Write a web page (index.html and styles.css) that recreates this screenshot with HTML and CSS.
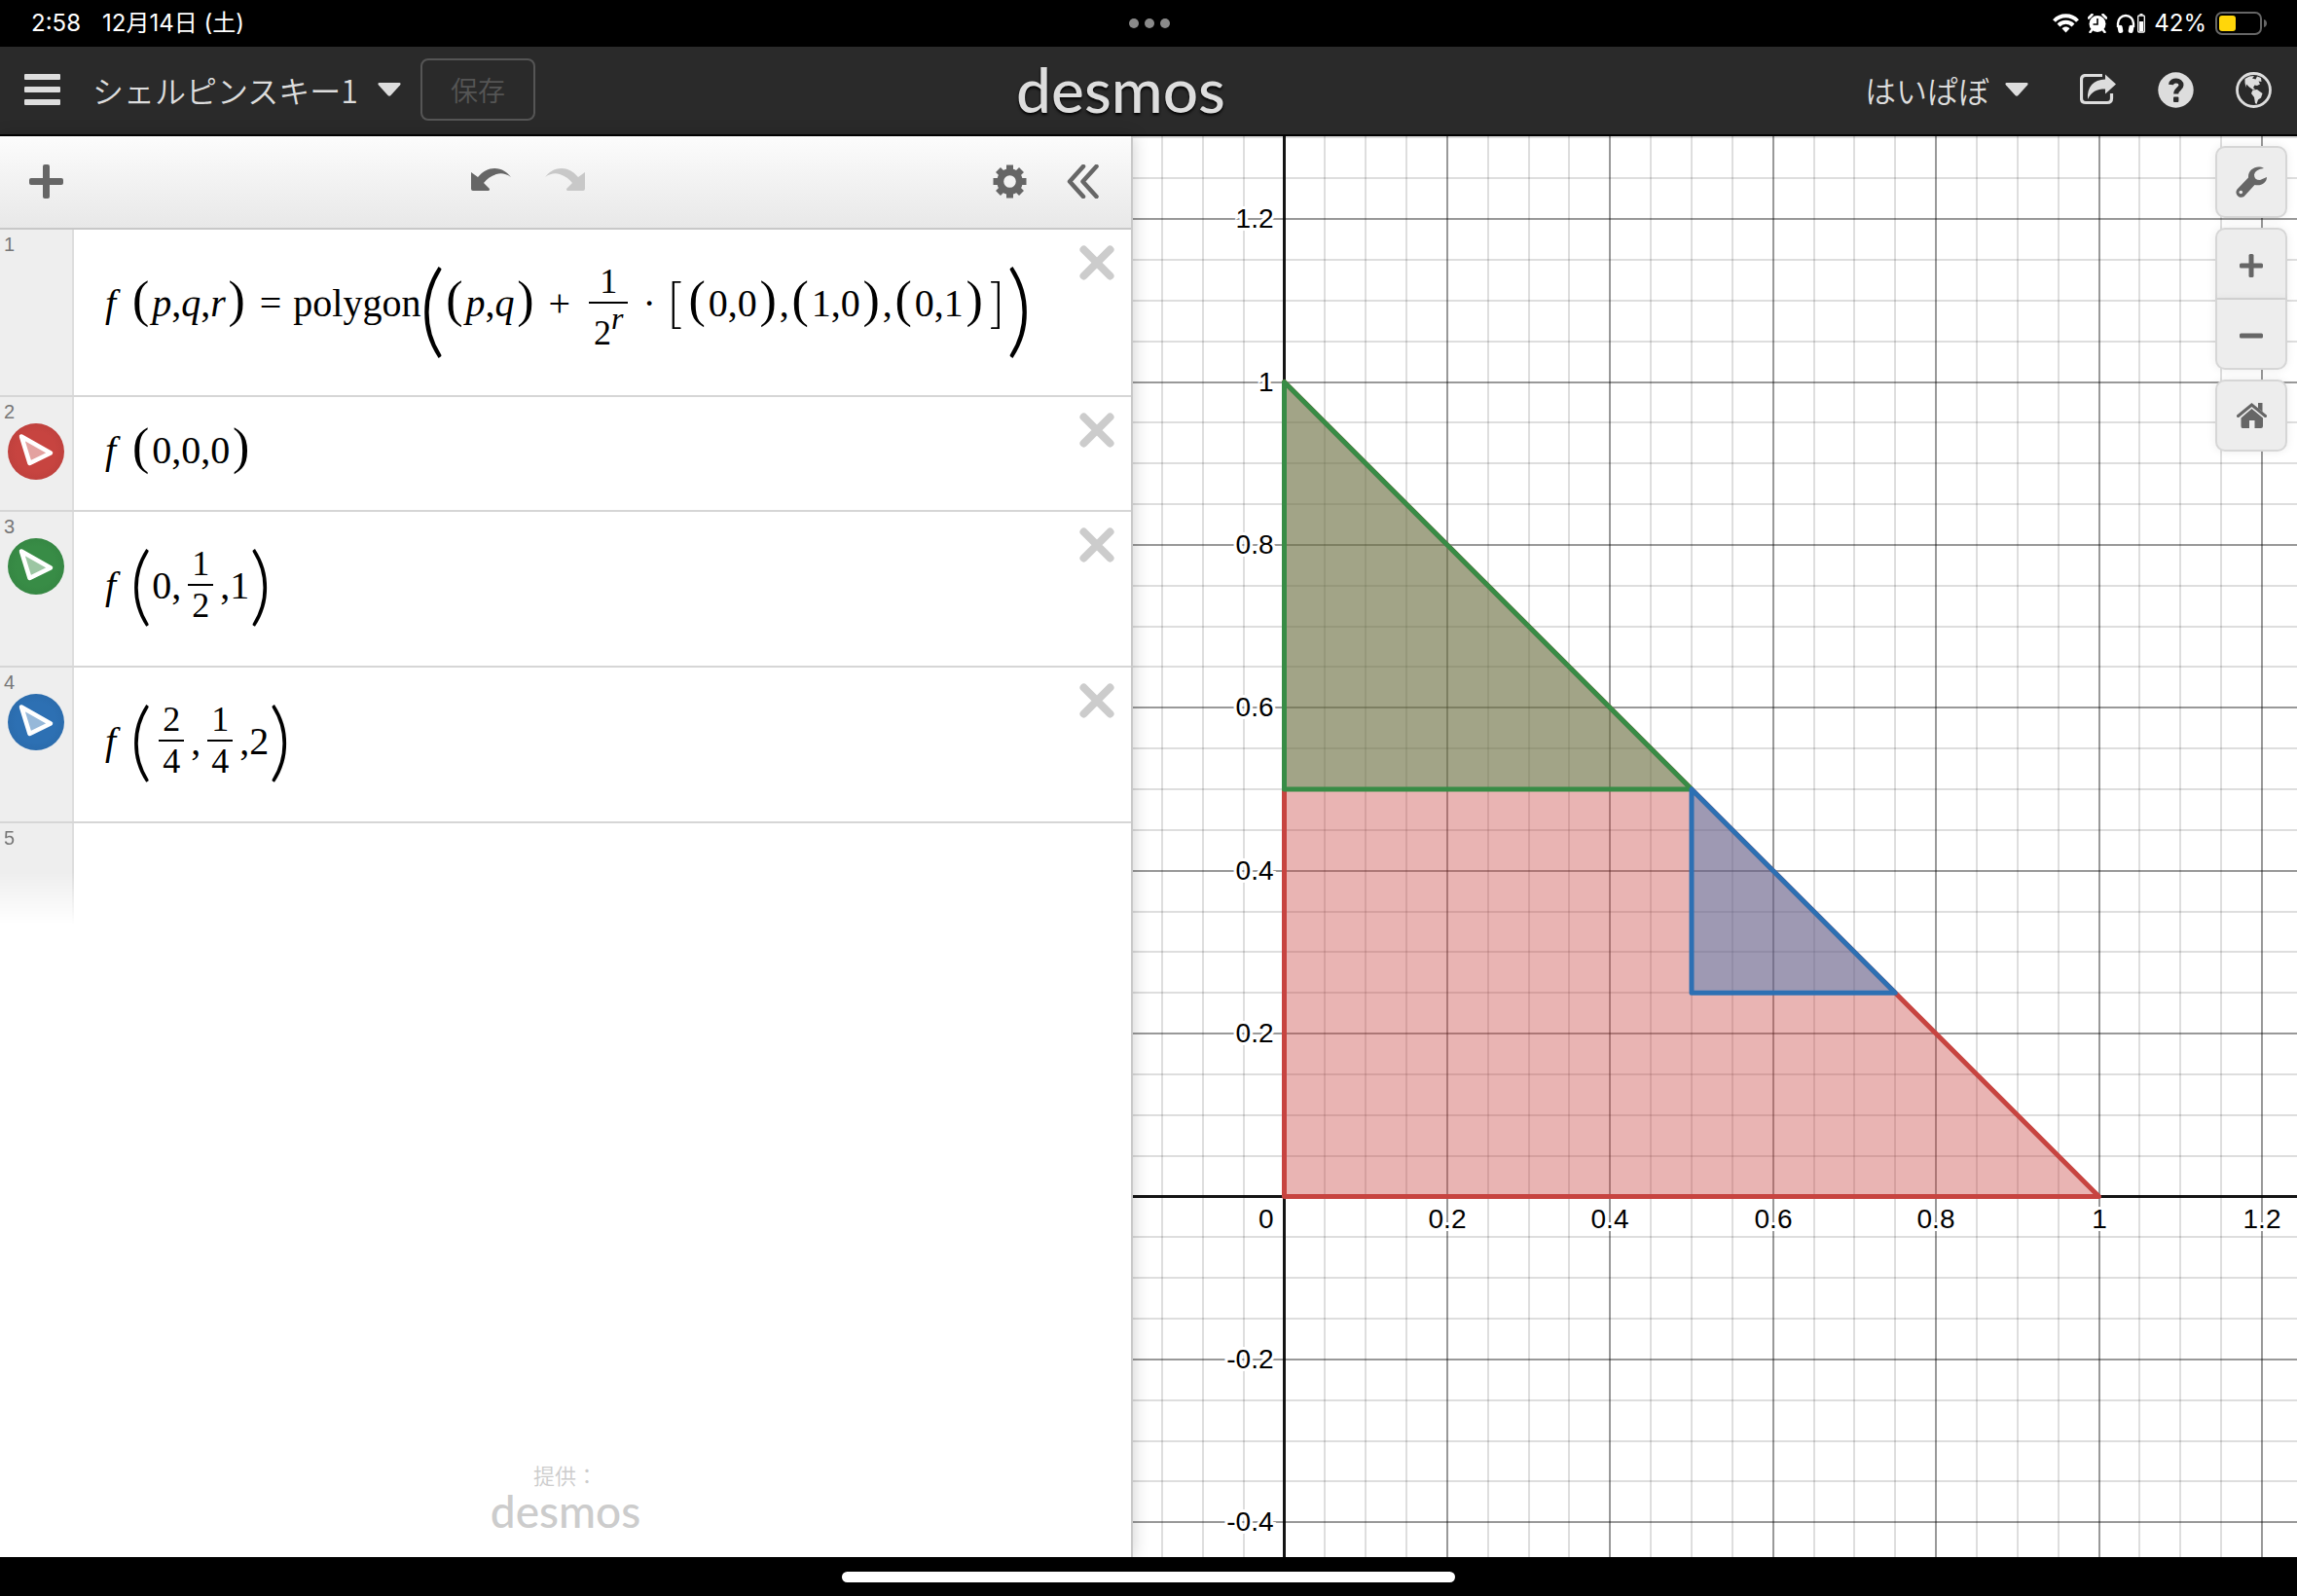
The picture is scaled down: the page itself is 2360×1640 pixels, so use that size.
FILE: index.html
```
<!DOCTYPE html>
<html lang="ja">
<head>
  <meta charset="UTF-8">
  <meta name="viewport" content="width=device-width, initial-scale=1.0">
  <title>シェルピンスキー1</title>
  <link rel="stylesheet" href="styles.css">
</head>
<body>

  <!-- Status bar -->
  <div class="status-bar">
    <div class="status-left">
      <span>2:58</span>
      <span>12月14日 (土)</span>
    </div>
    <div class="status-dots"><i></i><i></i><i></i></div>
    <div class="status-right">
      <svg width="27" height="20" viewBox="0 0 27 20" fill="none" stroke="#fff" stroke-width="4">
        <path d="M1.5 7.5C8 .6 19 .6 25.500 7.500"/>
        <path d="M6 12C10 7.800 17 7.800 21 12"/>
        <path d="M9.500 15.200C12 13 15 13 17.500 15.200L13.500 19.600Z" fill="#fff" stroke="none"/>
      </svg>
      <svg width="20" height="20" viewBox="0 0 20 20">
        <circle cx="10" cy="10.500" r="8.500" fill="#fff"/>
        <path d="M1 4.500L4.500 1M19 4.500L15.500 1M4.500 16.500L2.500 19M15.500 16.500L17.500 19" stroke="#fff" stroke-width="2.500" stroke-linecap="round"/>
        <path d="M10 5v6H5.500" fill="none" stroke="#000" stroke-width="1.600"/>
      </svg>
      <span class="headphones">
        <svg width="20" height="20" viewBox="0 0 20 20">
          <path d="M2 14V10a8 8 0 0 1 16 0V14" fill="none" stroke="#fff" stroke-width="2.400"/>
          <rect x="2" y="12" width="5" height="8" rx="2" fill="#fff" transform="rotate(-10 4 16)"/>
          <rect x="13" y="12" width="5" height="8" rx="2" fill="#fff" transform="rotate(10 16 16)"/>
        </svg>
        <svg width="8" height="20" viewBox="0 0 8 20">
          <rect x=".7" y="2" width="6.600" height="17" rx="1" fill="none" stroke="#fff" stroke-width="1.300"/>
          <rect x="2.500" y="0" width="3" height="1.500" fill="#fff"/>
          <rect x="2" y="8" width="4" height="10" fill="#fff"/>
        </svg>
      </span>
      <span>42%</span>
      <svg width="54" height="24" viewBox="0 0 54 24">
        <rect x="1" y="1" width="46" height="22" rx="6" fill="none" stroke="#666" stroke-width="2"/>
        <rect x="4" y="4" width="17" height="16" rx="3" fill="#ffd60a"/>
        <path d="M50 8C54 9 54 15 50 16Z" fill="#666"/>
      </svg>
    </div>
  </div>

  <!-- Header -->
  <header class="header">
    <div class="header-left">
      <button class="icon-btn" aria-label="メニュー">
        <svg width="37" height="32" viewBox="0 0 37 32" fill="#ddd">
          <rect width="37" height="6" rx="1"/><rect y="13" width="37" height="6" rx="1"/><rect y="26" width="37" height="6" rx="1"/>
        </svg>
      </button>
      <button class="title-btn">
        シェルピンスキー1
        <svg width="24" height="14" viewBox="0 0 24 14" fill="#ddd"><path d="M1.500 0H22.500Q24.500 .5 23 2.500L13.500 13Q12 14.500 10.500 13L1 2.500Q-.5 .5 1.500 0Z"/></svg>
      </button>
      <button class="save-btn" disabled>保存</button>
    </div>
    <h1 class="logo">desmos</h1>
    <div class="header-right">
      <button class="title-btn user-btn">
        はいぱぼ
        <svg width="24" height="14" viewBox="0 0 24 14" fill="#ddd"><path d="M1.500 0H22.500Q24.500 .5 23 2.500L13.500 13Q12 14.500 10.500 13L1 2.500Q-.5 .5 1.500 0Z"/></svg>
      </button>
      <button class="icon-btn" aria-label="共有">
        <svg width="37" height="32" viewBox="0 0 37 32">
          <path d="M23 1.500H6Q1.500 1.500 1.500 6V25Q1.500 29.500 6 29.500H28Q32.500 29.500 32.500 25V20" fill="none" stroke="#ddd" stroke-width="3.200"/>
          <path d="M26 .5L37 10.500L26 20.500V15.500C17 15.500 12 18 8 26C7 13 14 6 26 5.500Z" fill="#ddd"/>
        </svg>
      </button>
      <button class="icon-btn" aria-label="ヘルプ">
        <svg width="37" height="37" viewBox="0 0 37 37">
          <circle cx="18.500" cy="18.500" r="18.200" fill="#ddd"/>
          <path d="M13.500 13C14 7.500 24 7.500 24 13.500C24 17.500 18.700 17.500 18.700 22.500" fill="none" stroke="#2a2a2a" stroke-width="5"/>
          <rect x="16" y="25.500" width="5.400" height="5.400" rx="1" fill="#2a2a2a"/>
        </svg>
      </button>
      <button class="icon-btn" aria-label="言語">
        <svg width="37" height="37" viewBox="0 0 37 37">
          <circle cx="18.500" cy="18.500" r="17" fill="none" stroke="#ddd" stroke-width="2.800"/>
          <path d="M9.500 7L14 4.500L19 4L17 6.500L20.500 7.500L22 4.500L26 6L26.500 10L23.500 9.500L25 12.500L22 14L19.500 13.500L18 16L20 17.500L17.500 18L14 15.500L11 12.500L10.500 16L9.500 11Z" fill="#ddd"/>
          <path d="M17.500 18.500L22 18L27.500 22L26 26.500L23 28.500L21.500 33L20 32L19 26L16 22Z" fill="#ddd"/>
        </svg>
      </button>
    </div>
  </header>

  <main class="main">
    <!-- Expression list -->
    <section class="panel">
      <div class="toolbar">
        <button class="icon-btn" aria-label="追加">
          <svg width="35" height="35" viewBox="0 0 35 35" fill="#666"><rect x="14" width="7" height="35" rx="2"/><rect y="14" width="35" height="7" rx="2"/></svg>
        </button>
        <div class="toolbar-history">
          <button class="icon-btn" aria-label="元に戻す">
            <svg width="41" height="23" viewBox="0 0 41 23" fill="#666"><path d="M0 4L7 9C12 3 18 0 24 0C32 0 37 4 41 9C36 5.500 31 4.500 26 6C20 8 16 11 13 15L19 21Q19 23 18 23H2Q0 23 0 21Z"/></svg>
          </button>
          <button class="icon-btn" aria-label="やり直し" disabled>
            <svg width="41" height="23" viewBox="0 0 41 23" fill="#c8c8c8"><path d="M41 4L34 9C29 3 23 0 17 0C9 0 4 4 0 9C5 5.500 10 4.500 15 6C21 8 25 11 28 15L22 21Q22 23 23 23H39Q41 23 41 21Z"/></svg>
          </button>
        </div>
        <div class="toolbar-right">
          <button class="icon-btn" aria-label="リストを編集">
            <svg width="35" height="35" viewBox="-17.5 -17.5 35 35">
              <circle r="9.800" fill="none" stroke="#666" stroke-width="7"/>
              <path d="M0-17V-12M0 17V12M-17 0H-12M17 0H12M-12-12L-8.500-8.500M12 12L8.500 8.500M-12 12L-8.500 8.500M12-12L8.500-8.500" stroke="#666" stroke-width="7"/>
            </svg>
          </button>
          <button class="icon-btn" aria-label="リストを隠す">
            <svg width="33" height="35" viewBox="0 0 33 35" fill="none" stroke="#666" stroke-width="4.500" stroke-linecap="round" stroke-linejoin="round"><path d="M17 2L3 17.500L17 33M30.500 2L16.500 17.500L30.500 33"/></svg>
          </button>
        </div>
      </div>

      <ol class="expressions">
        <li class="row">
          <div class="gutter">1</div>
          <div class="math math-sup">
            <i class="fn">f</i><span class="paren">(</span><i>p</i>,<i>q</i>,<i>r</i><span class="paren">)</span><span class="op">=</span>polygon<span class="paren big bigger">(</span><span class="paren">(</span><i>p</i>,<i>q</i><span class="paren">)</span><span class="op">+</span>
            <span class="frac"><span class="num">1</span><span class="den">2<sup>r</sup></span></span>
            <span class="dot">·</span><span class="bracket">[</span><span class="paren">(</span>0,0<span class="paren">)</span>,<span class="paren">(</span>1,0<span class="paren">)</span>,<span class="paren">(</span>0,1<span class="paren">)</span><span class="bracket">]</span><span class="paren big bigger">)</span>
          </div>
          <button class="delete" aria-label="削除"><svg width="36" height="36" viewBox="0 0 36 36"><path d="M4.500 4.500L31.500 31.500M31.500 4.500L4.500 31.500"/></svg></button>
        </li>
        <li class="row">
          <div class="gutter">2
            <button class="color red" aria-label="表示"><svg width="58" height="58" viewBox="0 0 58 58"><path d="M14 13.500L44 30.500L22.500 41Z"/></svg></button>
          </div>
          <div class="math">
            <i class="fn">f</i><span class="paren">(</span>0,0,0<span class="paren">)</span>
          </div>
          <button class="delete" aria-label="削除"><svg width="36" height="36" viewBox="0 0 36 36"><path d="M4.500 4.500L31.500 31.500M31.500 4.500L4.500 31.500"/></svg></button>
        </li>
        <li class="row">
          <div class="gutter">3
            <button class="color green" aria-label="表示"><svg width="58" height="58" viewBox="0 0 58 58"><path d="M14 13.500L44 30.500L22.500 41Z"/></svg></button>
          </div>
          <div class="math">
            <i class="fn">f</i><span class="paren big">(</span>0,<span class="frac"><span class="num">1</span><span class="den">2</span></span>,1<span class="paren big">)</span>
          </div>
          <button class="delete" aria-label="削除"><svg width="36" height="36" viewBox="0 0 36 36"><path d="M4.500 4.500L31.500 31.500M31.500 4.500L4.500 31.500"/></svg></button>
        </li>
        <li class="row">
          <div class="gutter">4
            <button class="color blue" aria-label="表示"><svg width="58" height="58" viewBox="0 0 58 58"><path d="M14 13.500L44 30.500L22.500 41Z"/></svg></button>
          </div>
          <div class="math">
            <i class="fn">f</i><span class="paren big">(</span><span class="frac"><span class="num">2</span><span class="den">4</span></span>,<span class="frac"><span class="num">1</span><span class="den">4</span></span>,2<span class="paren big">)</span>
          </div>
          <button class="delete" aria-label="削除"><svg width="36" height="36" viewBox="0 0 36 36"><path d="M4.500 4.500L31.500 31.500M31.500 4.500L4.500 31.500"/></svg></button>
        </li>
        <li class="row row-new">
          <div class="gutter">5</div>
        </li>
      </ol>

      <div class="powered">
        <span>提供：</span>
        <span class="powered-logo">desmos</span>
      </div>
    </section>

    <!-- Graph paper -->
    <section class="graph">
      <svg class="graph-svg" id="graph"></svg>
      <div class="graph-buttons">
        <button class="graph-btn" aria-label="グラフ設定">
          <svg width="32" height="32" viewBox="0 0 32 32"><path d="M29 2C22-2 12.500 3 13 11.500L1.500 23.500C-2 28 4 34 8.500 31L19.500 19C26 20.500 32 17 32 11L25 14Q19 14 19 8.500Q20 3 29 2Z" fill="#666"/><circle cx="5.300" cy="26.500" r="1.800" fill="#ededed"/></svg>
        </button>
        <div class="zoom-group">
          <button class="graph-btn" aria-label="拡大">
            <svg width="24" height="24" viewBox="0 0 24 24" fill="#666"><rect x="9.500" width="5" height="24" rx="1.500"/><rect y="9.500" width="24" height="5" rx="1.500"/></svg>
          </button>
          <button class="graph-btn" aria-label="縮小">
            <svg width="24" height="24" viewBox="0 0 24 24" fill="#666"><rect y="9.500" width="24" height="5" rx="1.500"/></svg>
          </button>
        </div>
        <button class="graph-btn" aria-label="ホーム">
          <svg width="31" height="26" viewBox="0 0 31 26"><path d="M1.500 13.500L15.500 2L29.500 13.500" fill="none" stroke="#666" stroke-width="3" stroke-linecap="round"/><path d="M22 0H26.500V9L22 5.500ZM15.500 6L27 15.500V24Q27 26 25 26H18.500V18H13V26H6Q4.500 26 4.500 24V15.500Z" fill="#666"/></svg>
        </button>
      </div>
    </section>
  </main>

  <div class="home-bar"><span></span></div>

  <script>
    // Viewport: where the origin sits and how many pixels one unit takes
    const origin = { x: 155.5, y: 1089.5 };
    const unit = 837;
    const step = 0.05;
    const svg = document.getElementById('graph');

    const polygons = [
      { color: '#c74440', points: [[0, 0], [1, 0], [0, 1]] },
      { color: '#388c46', points: [[0, 0.5], [0.5, 0.5], [0, 1]] },
      { color: '#2d70b3', points: [[0.5, 0.25], [0.75, 0.25], [0.5, 0.5]] }
    ];

    function add(tag, attrs, text) {
      const el = document.createElementNS('http://www.w3.org/2000/svg', tag);
      for (const key in attrs) el.setAttribute(key, attrs[key]);
      if (text !== undefined) el.textContent = text;
      svg.appendChild(el);
    }

    const px = x => origin.x + x * unit;
    const py = y => origin.y - y * unit;

    function drawGraph() {
      const w = svg.clientWidth;
      const h = svg.clientHeight;
      svg.innerHTML = '';

      const iMin = Math.ceil(-origin.x / unit / step);
      const iMax = Math.floor((w - origin.x) / unit / step);
      const jMin = Math.ceil((origin.y - h) / unit / step);
      const jMax = Math.floor(origin.y / unit / step);

      // Grid lines, every fourth one is major
      for (let i = iMin; i <= iMax; i++) {
        if (i === 0) continue;
        const x = Math.round(px(i * step));
        add('line', { x1: x, x2: x, y1: 0, y2: h, class: i % 4 ? 'minor' : 'major' });
      }
      for (let j = jMin; j <= jMax; j++) {
        if (j === 0) continue;
        const y = Math.round(py(j * step));
        add('line', { x1: 0, x2: w, y1: y, y2: y, class: j % 4 ? 'minor' : 'major' });
      }
      add('line', { x1: origin.x, x2: origin.x, y1: 0, y2: h, class: 'axis' });
      add('line', { x1: 0, x2: w, y1: origin.y, y2: origin.y, class: 'axis' });

      // Numbers
      for (let i = iMin; i <= iMax; i++) {
        if (i % 4 || i === 0) continue;
        add('text', { x: Math.round(px(i * step)), y: origin.y + 32, class: 'label label-x' }, +(i * step).toFixed(1));
      }
      for (let j = jMin; j <= jMax; j++) {
        if (j % 4 || j === 0) continue;
        add('text', { x: origin.x - 11, y: Math.round(py(j * step)) + 9, class: 'label label-y' }, +(j * step).toFixed(1));
      }
      add('text', { x: origin.x - 11, y: origin.y + 32, class: 'label label-y' }, 0);

      polygons.forEach(p => {
        const points = p.points.map(([x, y]) => px(x) + ',' + py(y)).join(' ');
        add('polygon', { points: points, fill: p.color, stroke: p.color, class: 'shape' });
      });
    }

    drawGraph();
    window.addEventListener('resize', drawGraph);
  </script>

</body>
</html>
```
FILE: styles.css
```
* {
  box-sizing: border-box;
}

body {
  margin: 0;
  min-height: 100vh;
  display: flex;
  flex-direction: column;
  background: #fff;
  font-family: "Liberation Sans", "Noto Sans CJK JP", sans-serif;
}

button {
  margin: 0;
  padding: 0;
  border: none;
  background: none;
  font-family: inherit;
  cursor: pointer;
}

svg {
  display: block;
}

/* Status bar */
.status-bar {
  height: 48px;
  padding: 0 30px 0 32px;
  display: grid;
  grid-template-columns: 1fr auto 1fr;
  align-items: center;
  background: #000;
  color: #fff;
  font-family: Inter, "Noto Sans CJK JP", sans-serif;
  font-size: 24px;
  line-height: 32px;
  font-weight: 400;
}

.status-left {
  display: flex;
  gap: 22px;
}

.status-dots {
  display: flex;
  gap: 6px;
}

.status-dots i {
  width: 10px;
  height: 10px;
  border-radius: 50%;
  background: #8a8a8a;
}

.status-right {
  display: flex;
  justify-content: flex-end;
  align-items: center;
  gap: 9px;
}

.headphones {
  display: flex;
  gap: 2px;
}

/* Header */
.header {
  height: 92px;
  padding: 0 26px 2px 25px;
  display: grid;
  grid-template-columns: 1fr auto 1fr;
  align-items: center;
  background: #2a2a2a;
  border-bottom: 2px solid #000;
  color: #ddd;
}

.header-left,
.header-right {
  display: flex;
  align-items: center;
}

.header-right {
  justify-content: flex-end;
  gap: 43px;
}

.title-btn {
  display: flex;
  align-items: center;
  gap: 20px;
  color: #ddd;
  font-family: "Noto Sans CJK JP", sans-serif;
  font-size: 32px;
  line-height: 48px;
  font-weight: 350;
}

.header-left .title-btn {
  margin: 0 20px 0 33px;
}

.user-btn {
  gap: 16px;
  margin-right: 10px;
}

.save-btn {
  width: 118px;
  height: 64px;
  border: 2px solid #555;
  border-radius: 8px;
  color: #555;
  font-size: 28px;
  font-weight: 350;
}

.logo {
  margin: 0 56px 0 0;
  font-family: Lato, sans-serif;
  font-size: 64px;
  line-height: 80px;
  font-weight: 500;
  text-shadow: 0 2px 3px #000;
}

/* Main area */
.main {
  flex: 1;
  display: grid;
  grid-template-columns: 291fr 299fr;
}

.panel {
  z-index: 1;
  display: flex;
  flex-direction: column;
  background: #fff;
  border-right: 2px solid #c8c8c8;
  box-shadow: 0 0 16px rgba(0, 0, 0, 0.2);
}

.toolbar {
  height: 96px;
  padding: 0 33px 2px 30px;
  display: grid;
  grid-template-columns: 1fr auto 1fr;
  align-items: center;
  background: linear-gradient(#fcfcfc, #e8e8e8);
  border-bottom: 2px solid #c8c8c8;
}

.toolbar-history {
  display: flex;
  gap: 35px;
  margin: 0 74px 4px 0;
}

.toolbar-right {
  display: flex;
  justify-content: flex-end;
  gap: 41px;
}

/* Expressions */
.expressions {
  margin: 0;
  padding: 0;
  list-style: none;
}

.row {
  display: flex;
  align-items: stretch;
  border-bottom: 2px solid #d6d6d6;
}

.row-new {
  border-bottom: none;
}

.gutter {
  width: 76px;
  padding-left: 4px;
  background: #eee;
  border-right: 2px solid #ddd;
  color: #777;
  font-size: 20px;
  line-height: 30px;
}

.row-new .gutter {
  height: 104px;
  -webkit-mask-image: linear-gradient(#000 48%, transparent);
  mask-image: linear-gradient(#000 48%, transparent);
}

.color {
  display: block;
  width: 58px;
  height: 58px;
  margin: -3px 0 0 4px;
  border-radius: 50%;
}

.color path {
  fill: rgba(255, 255, 255, 0.5);
  stroke: #fff;
  stroke-width: 4.5;
  stroke-linejoin: round;
}

.red {
  background: radial-gradient(#c74440 50%, #b53d3a);
}

.green {
  background: radial-gradient(#388c46 50%, #32803f);
}

.blue {
  background: radial-gradient(#2d70b3 50%, #2866a4);
}

.delete {
  align-self: flex-start;
  margin: 16px 17px 0 auto;
}

.delete path {
  stroke: #ccc;
  stroke-width: 8;
  stroke-linecap: round;
}

.math {
  display: flex;
  align-items: center;
  min-height: 116px;
  padding: 30px 0 36px 32px;
  color: #000;
  font-family: "Liberation Serif", serif;
  font-size: 40px;
  line-height: 50px;
}

.math-sup {
  padding-bottom: 48px;
}

.fn {
  margin-right: 14px;
}

.op {
  margin: 0 12px;
}

.dot {
  margin: 0 8px;
}

.paren,
.bracket {
  width: 23px;
  height: 50px;
  display: flex;
  justify-content: center;
  font-size: 52px;
  line-height: 42px;
}

.bracket {
  font-family: Lato, sans-serif;
  font-weight: 300;
  font-size: 56px;
  line-height: 46px;
}

.big {
  height: 92px;
  font-family: Lato, sans-serif;
  font-weight: 300;
  font-size: 88px;
  line-height: 84px;
}

.bigger {
  font-size: 104px;
  line-height: 96px;
}

.frac {
  margin: 0 7px;
  display: flex;
  flex-direction: column;
  text-align: center;
  font-size: 36px;
  line-height: 36px;
}

.num,
.den {
  height: 44px;
  padding: 5px 4px 3px;
}

.den {
  height: 48px;
  padding: 2px 4px 0;
  border-top: 2px solid #000;
}

.math-sup .den {
  padding: 12px 5px 0;
}

.den sup {
  font-size: 32px;
  font-style: italic;
  line-height: 0;
  vertical-align: 16px;
}

/* Footer of the list */
.powered {
  margin-top: auto;
  padding-bottom: 24px;
  display: flex;
  flex-direction: column;
  align-items: center;
  color: #ccc;
  font-size: 22px;
  line-height: 24px;
  font-weight: 350;
}

.powered-logo {
  font-family: Lato, sans-serif;
  font-size: 46px;
  line-height: 46px;
  font-weight: 500;
}

/* Graph */
.graph {
  position: relative;
  min-width: 0;
}

.graph-svg {
  width: 100%;
  height: 100%;
}

.minor,
.major,
.axis {
  stroke: #000;
  stroke-width: 2px;
  stroke-opacity: 0.13;
}

.major {
  stroke-opacity: 0.4;
}

.axis {
  stroke-width: 3px;
  stroke-opacity: 0.92;
}

.label {
  font-size: 28px;
  fill: #000;
  stroke: #fff;
  stroke-width: 6px;
  paint-order: stroke;
}

.label-x {
  text-anchor: middle;
}

.label-y {
  text-anchor: end;
}

.shape {
  fill-opacity: 0.4;
  stroke-width: 5px;
  stroke-linejoin: round;
}

.graph-buttons {
  position: absolute;
  top: 10px;
  right: 10px;
  display: flex;
  flex-direction: column;
  gap: 10px;
}

.graph-btn {
  width: 74px;
  height: 74px;
  display: flex;
  justify-content: center;
  align-items: center;
  background: #ededed;
  border: 2px solid #d6d6d6;
  border-radius: 10px;
  box-shadow: 0 0 10px rgba(0, 0, 0, 0.08);
}

.zoom-group .graph-btn {
  padding-top: 4px;
}

.zoom-group .graph-btn:first-child {
  border-radius: 10px 10px 0 0;
}

.zoom-group .graph-btn:last-child {
  height: 72px;
  border-top: none;
  border-radius: 0 0 10px 10px;
}

/* Home indicator */
.home-bar {
  height: 40px;
  display: flex;
  justify-content: center;
  align-items: center;
  background: #000;
}

.home-bar span {
  width: 630px;
  height: 11px;
  border-radius: 6px;
  background: #fff;
}
```
